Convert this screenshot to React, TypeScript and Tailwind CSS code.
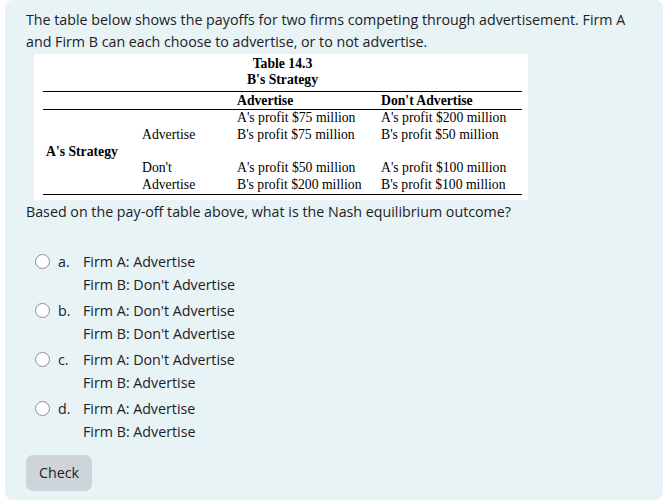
import React from "react";

const serif = { fontFamily: '"Liberation Serif", "DejaVu Serif", serif' };

function Radio() {
  return <span className="inline-block w-[15px] h-[15px] rounded-full border border-[#8a8f94] bg-white shrink-0" />;
}

const options = [
  { k: "a.", a: "Advertise", b: "Don't Advertise" },
  { k: "b.", a: "Don't Advertise", b: "Don't Advertise" },
  { k: "c.", a: "Don't Advertise", b: "Advertise" },
  { k: "d.", a: "Advertise", b: "Advertise" },
];

export default function App() {
  return (
    <div className="w-[670px] h-[503px] bg-white text-[#1d2125]" style={{ fontFamily: '"Open Sans", "Noto Sans", sans-serif' }}>
      <div className="mx-[5px] w-[658px] h-[500px] rounded-[8px] bg-[#e7f3f5] px-[21px] pt-[9px]">
        <p className="text-[14.25px] leading-[22px]">
          The table below shows the payoffs for two firms competing through advertisement. Firm A and Firm B can each choose to advertise, or to not advertise.
        </p>
        <div className="ml-[8px] mt-[1px] w-[494px] h-[146px] bg-white pt-[2px] pl-[9px] text-[13.7px] text-black" style={serif}>
          <div className="w-[479px] text-center font-bold leading-[16px]">Table 14.3</div>
          <div className="w-[479px] text-center font-bold leading-[16px]">B's Strategy</div>
          <div className="mt-[3px] w-[479px] border-t-[1.5px] border-black" />
          <div className="grid grid-cols-[99px_95px_144px_141px] leading-[17px]">
            <div className="h-[17px]" /><div />
            <div className="font-bold">Advertise</div>
            <div className="font-bold">Don't Advertise</div>
          </div>
          <div className="w-[479px] border-t-[1.5px] border-black" />
          <div className="grid grid-cols-[99px_95px_144px_141px] grid-rows-[16.8px_16.8px_16.8px_16.8px_16.8px] leading-[16.8px] whitespace-nowrap">
            <div /><div />
            <div>A's profit $75 million</div>
            <div>A's profit $200 million</div>
            <div /><div>Advertise</div>
            <div>B's profit $75 million</div>
            <div>B's profit $50 million</div>
            <div className="pl-[3px] font-bold">A's Strategy</div><div /><div /><div />
            <div /><div>Don't</div>
            <div>A's profit $50 million</div>
            <div>A's profit $100 million</div>
            <div /><div>Advertise</div>
            <div>B's profit $200 million</div>
            <div>B's profit $100 million</div>
          </div>
          <div className="w-[479px] border-t-[1.5px] border-black" />
        </div>
        <p className="mt-[1px] text-[14.25px] leading-[22px]">Based on the pay-off table above, what is the Nash equilibrium outcome?</p>
        <div className="mt-[27px] flex flex-col gap-[3px] text-[14.25px] leading-[23px]">
          {options.map((o) => (
            <div key={o.k} className="flex">
              <div className="flex items-center h-[23px] pl-[9px] w-[57px]">
                <Radio />
                <span className="ml-[8px]">{o.k}</span>
              </div>
              <div>
                <div>Firm A: {o.a}</div>
                <div>Firm B: {o.b}</div>
              </div>
            </div>
          ))}
        </div>
        <button className="mt-[12px] h-[36px] w-[66px] rounded-[7px] bg-[#ced4da] text-[14.25px] text-[#1d2125]">Check</button>
      </div>
    </div>
  );
}
